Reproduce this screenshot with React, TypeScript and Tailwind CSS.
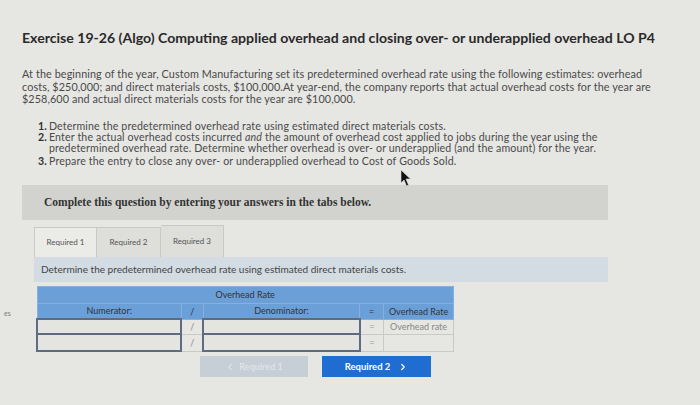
import { ChevronLeft, ChevronRight } from 'lucide-react'

const font = { fontFamily: 'Lato, "Open Sans", sans-serif' }

const Cursor = () => (
  <svg width="12" height="18" viewBox="0 0 12 18" className="absolute left-[400px] top-[169px]">
    <path d="M1 1 L1 14 L4 11 L6.5 17 L8.5 16 L6 10 L10.5 10 Z" fill="#111" stroke="#ddd" strokeWidth="0.6" />
  </svg>
)

export default function App() {
  return (
    <div className="relative h-[405px] w-[700px] overflow-hidden bg-[#e6e6e3] text-[#3d3d3d]" style={font}>
      <Cursor />
      <div className="absolute left-[4px] top-[308px] text-[7px] text-[#777]">es</div>

      <div className="pl-[22px] pt-[29px]">
        <h1 className="whitespace-nowrap text-[14.1px] font-bold leading-[18px] text-[#2a2a2a]">
          Exercise 19-26 (Algo) Computing applied overhead and closing over- or underapplied overhead LO P4
        </h1>

        <p className="mt-[21px] whitespace-nowrap text-[10.8px] leading-[12.6px] tracking-[0.1px] text-[#4a4a4a]">
          At the beginning of the year, Custom Manufacturing set its predetermined overhead rate using the following estimates: overhead
          <br />
          costs, $250,000; and direct materials costs, $100,000.At year-end, the company reports that actual overhead costs for the year are
          <br />
          $258,600 and actual direct materials costs for the year are $100,000.
        </p>

        <ol className="mt-[15px] whitespace-nowrap pl-[16px] text-[10.6px] leading-[11.3px] tracking-[0.15px] text-[#4a4a4a]">
          <li className="flex gap-[2px]">
            <span className="font-bold text-[#333]">1.</span>
            <span>Determine the predetermined overhead rate using estimated direct materials costs.</span>
          </li>
          <li className="flex gap-[2px]">
            <span className="font-bold text-[#333]">2.</span>
            <span>
              Enter the actual overhead costs incurred <i>and</i> the amount of overhead cost applied to jobs during the year using the
              <br />
              predetermined overhead rate. Determine whether overhead is over- or underapplied (and the amount) for the year.
            </span>
          </li>
          <li className="mt-[1px] flex gap-[2px]">
            <span className="font-bold text-[#333]">3.</span>
            <span>Prepare the entry to close any over- or underapplied overhead to Cost of Goods Sold.</span>
          </li>
        </ol>

        <div className="mt-[18px] flex h-[35px] w-[586px] items-center bg-[#d2d3cf] pl-[22px]">
          <span className="text-[11.5px] font-bold text-[#333]" style={{ fontFamily: '"Liberation Serif", "DejaVu Serif", serif' }}>
            Complete this question by entering your answers in the tabs below.
          </span>
        </div>

        <div className="ml-[12px] mt-[8px]">
          <div className="flex h-[29px] items-end text-[8px] text-[#555]">
            <div className="flex h-[30px] w-[63px] items-center justify-center border border-b-0 border-[#c9c9c6] bg-[#ebebe8]">Required 1</div>
            <div className="flex h-[30px] w-[64px] items-center justify-center border border-b-0 border-l-0 border-[#c9c9c6] bg-[#dededb]">Required 2</div>
            <div className="flex h-[32px] w-[63px] items-center justify-center border border-b-0 border-l-0 border-[#c9c9c6] bg-[#dededb]">Required 3</div>
          </div>
          <div className="flex h-[25px] w-[574px] items-center bg-[#d3dce3] pl-[7px] text-[10.05px] text-[#444]">
            Determine the predetermined overhead rate using estimated direct materials costs.
          </div>

          <table className="ml-[2px] mt-[4px] w-[418px] border-collapse text-[9px] text-[#333]">
            <colgroup>
              <col className="w-[145px]" />
              <col className="w-[22px]" />
              <col className="w-[157px]" />
              <col className="w-[24px]" />
              <col className="w-[70px]" />
            </colgroup>
            <thead>
              <tr className="h-[17px] bg-[#6b9fd8]">
                <th colSpan={5} className="border border-[#88b0de] text-center font-normal">
                  Overhead Rate
                </th>
              </tr>
              <tr className="h-[16px] bg-[#6b9fd8]">
                <th className="border border-[#88b0de] font-normal">Numerator:</th>
                <th className="border border-[#88b0de] font-normal">/</th>
                <th className="border border-[#88b0de] font-normal">Denominator:</th>
                <th className="border border-[#88b0de] font-normal">=</th>
                <th className="border border-[#88b0de] font-normal">Overhead Rate</th>
              </tr>
            </thead>
            <tbody>
              <tr className="h-[15px]">
                <td className="border-2 border-[#5f6b80] bg-[#e4e4e1]"></td>
                <td className="border border-[#c9c9c6] text-center text-[#888]">/</td>
                <td className="border-2 border-[#5f6b80] bg-[#e4e4e1]"></td>
                <td className="border border-[#c9c9c6] text-center text-[#999]">=</td>
                <td className="border border-[#c9c9c6] text-center text-[#888]">Overhead rate</td>
              </tr>
              <tr className="h-[17px]">
                <td className="border-2 border-[#5f6b80] bg-[#e4e4e1]"></td>
                <td className="border border-[#c9c9c6] text-center text-[#888]">/</td>
                <td className="border-2 border-[#5f6b80] bg-[#e4e4e1]"></td>
                <td className="border border-[#c9c9c6] text-center text-[#999]">=</td>
                <td className="border border-[#c9c9c6]"></td>
              </tr>
            </tbody>
          </table>

          <div className="ml-[166px] mt-[4px] flex gap-[14px]">
            <button className="flex h-[21px] w-[108px] items-center justify-center gap-[4px] bg-[#c6ced6] text-[9px] font-bold text-[#dde3e9]">
              <ChevronLeft size={10} strokeWidth={3} />
              Required 1
            </button>
            <button className="flex h-[21px] w-[109px] items-center justify-center gap-[8px] bg-[#1f6dd0] text-[9.5px] font-bold text-white">
              Required 2
              <ChevronRight size={10} strokeWidth={3} />
            </button>
          </div>
        </div>
      </div>
    </div>
  )
}
